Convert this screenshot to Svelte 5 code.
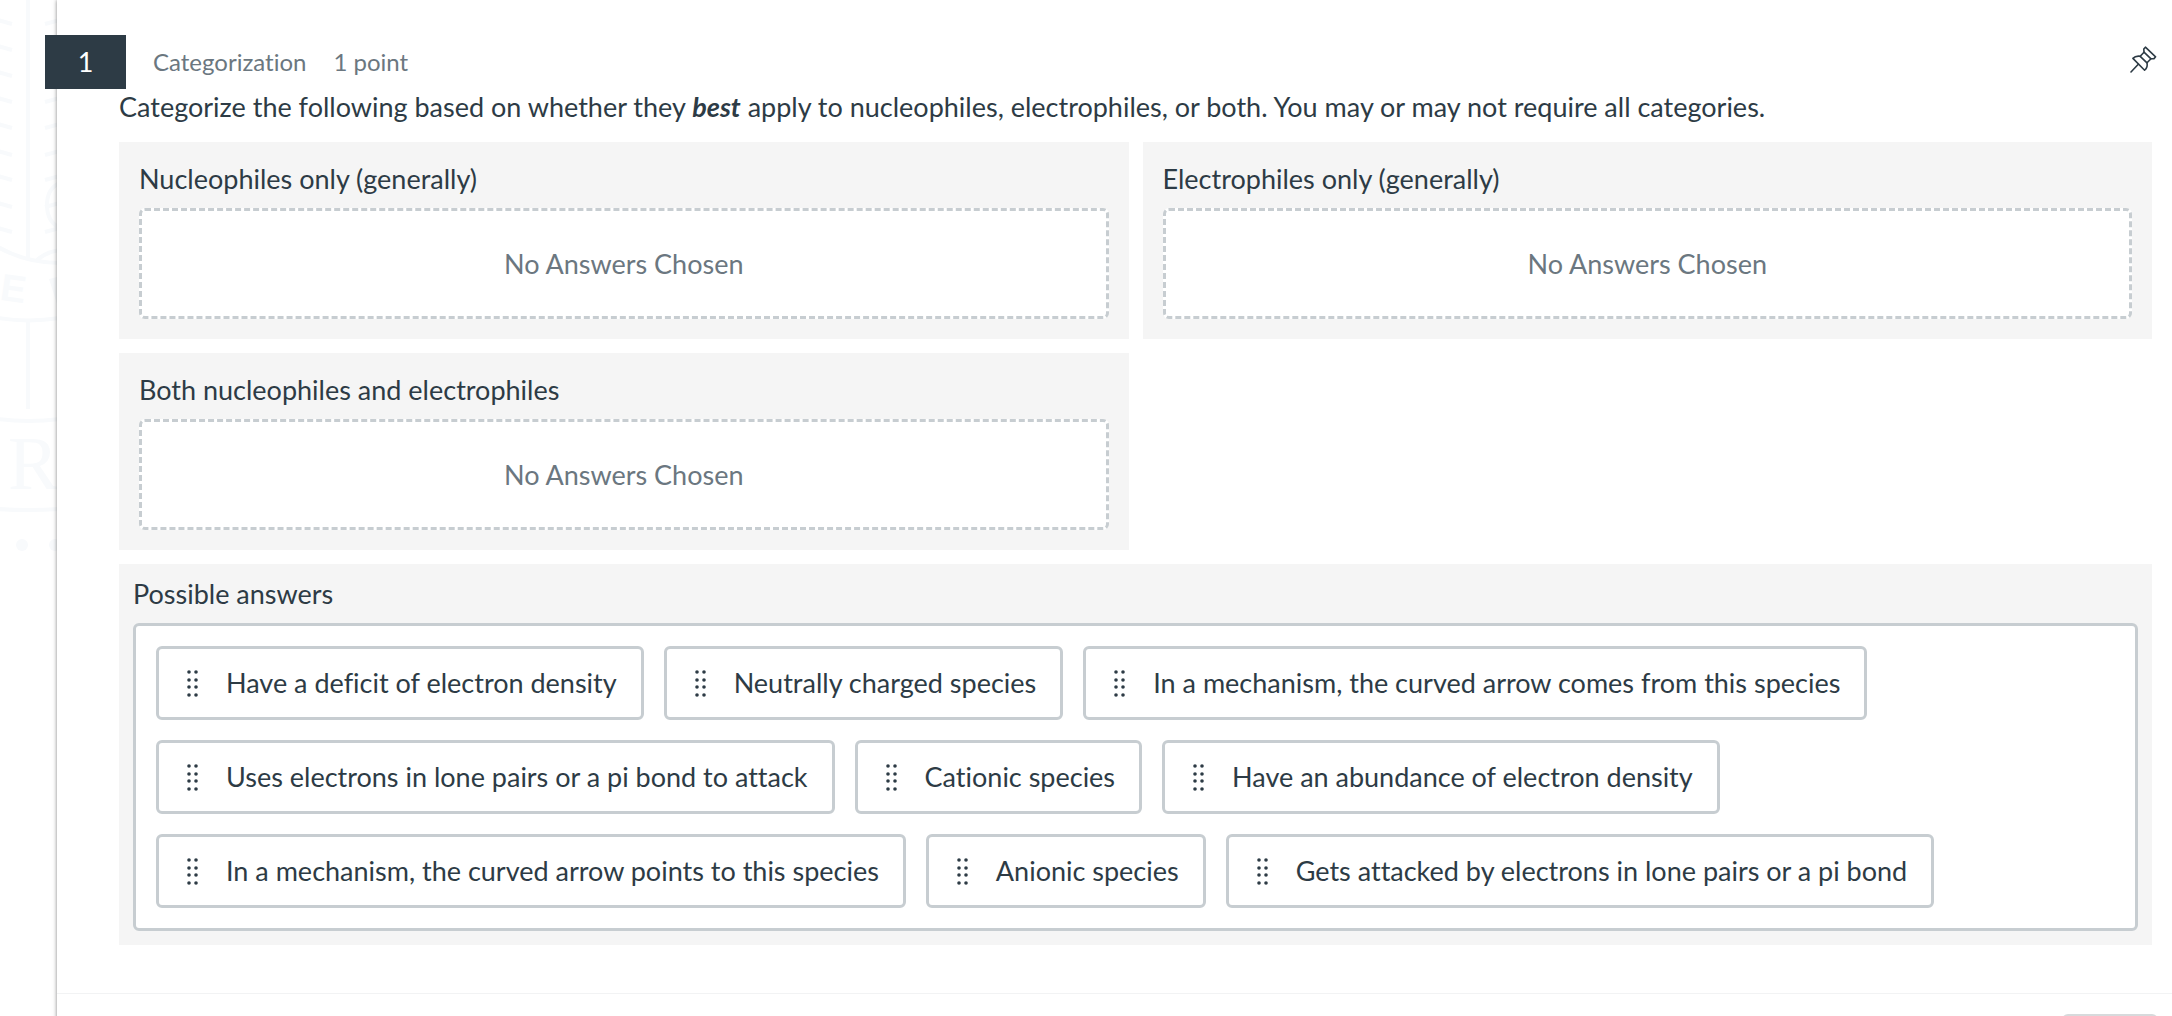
<script>
    const categories = [
        'Nucleophiles only (generally)',
        'Electrophiles only (generally)',
        'Both nucleophiles and electrophiles'
    ];

    const answers = [
        'Have a deficit of electron density',
        'Neutrally charged species',
        'In a mechanism, the curved arrow comes from this species',
        'Uses electrons in lone pairs or a pi bond to attack',
        'Cationic species',
        'Have an abundance of electron density',
        'In a mechanism, the curved arrow points to this species',
        'Anionic species',
        'Gets attacked by electrons in lone pairs or a pi bond'
    ];

    const leftTicks = [22, 48, 74, 100, 126, 153, 178, 205, 230];

    let pinned = $state(false);
</script>

<div class="page">
    <!-- faint crest behind the sheet -->
    <svg class="crest" width="60" height="560" viewBox="0 0 60 560" aria-hidden="true">
        <g fill="none" stroke="#f8fafc" stroke-width="4">
            <path d="M28 0V260M28 320V409" />
            {#each leftTicks as y}
                <path d="M-2 {y - 2}L12 {y + 2}M45 {y + 2}L60 {y - 2}" />
            {/each}
            <path d="M-2 247Q26 263 60 263M37 260Q46 252 60 250" />
            <path d="M60 183Q47 188 47 205T60 228" />
            <path d="M-2 318Q28 323 60 318M-2 419Q28 423 60 419M-2 509Q28 511 60 509" />
        </g>
        <g fill="#f8fafc">
            <path d="M49 279L57 277V304Z" />
            <text x="-1" y="300" font-family="Liberation Sans, sans-serif" font-weight="700" font-size="38" transform="rotate(8 0 300)">E</text>
            <text x="8" y="489" font-family="Liberation Serif, serif" font-size="76">R</text>
            <circle cx="22" cy="545" r="6" />
            <circle cx="55" cy="545" r="6" />
        </g>
    </svg>

    <main class="sheet">
        <header>
            <span class="number">1</span>
            <span class="meta">Categorization</span>
            <span class="meta">1 point</span>
            <button class="pin" aria-label="Pin" aria-pressed={pinned} onclick={() => (pinned = !pinned)}>
                <svg width="28" height="28" viewBox="0 0 28 28" fill="none" stroke="#2d3b45" stroke-width="1.6" stroke-linejoin="round" stroke-linecap="round">
                    <path d="M2 27L9.3 19.2" />
                    <path d="M3.9 13.4Q6.5 10.6 11.2 11.3L18 17.8Q19 22.5 15.6 25.2Z" />
                    <path d="M11.2 11.3L15 7.2M18 17.8L22 13.8" />
                    <path d="M16.4 2.2L26.6 11.8L25 13.6L22 13.8L15 7.2L14.8 4Z" />
                </svg>
            </button>
        </header>

        <section class="question">
            <p>
                Categorize the following based on whether they <strong><em>best</em></strong> apply to nucleophiles,
                electrophiles, or both. You may or may not require all categories.
            </p>

            <div class="categories">
                {#each categories as category}
                    <div class="category">
                        <h3>{category}</h3>
                        <div class="dropzone">No Answers Chosen</div>
                    </div>
                {/each}
            </div>

            <div class="possible">
                <h3>Possible answers</h3>
                <div class="answers">
                    {#each answers as answer}
                        <button class="answer" draggable="true">
                            <svg width="12" height="28" viewBox="0 0 12 28" fill="#2d3b45" aria-hidden="true">
                                {#each [3, 11, 18, 26] as y}
                                    <circle cx="2" cy={y} r="1.8" />
                                    <circle cx="9" cy={y} r="1.8" />
                                {/each}
                            </svg>
                            {answer}
                        </button>
                    {/each}
                </div>
            </div>
        </section>

        <footer>
            <button class="next" aria-label="Next"></button>
        </footer>
    </main>
</div>

<style>
    :global(body) {
        background: #fff;
    }
    .page {
        position: relative;
        height: 100vh;
        overflow: hidden;
        font-family: Lato, sans-serif;
        font-size: 27px;
        line-height: 40px;
        font-variant-ligatures: no-common-ligatures;
        color: #2d3b45;
    }
    .crest {
        position: absolute;
        top: 0;
        left: 0;
    }
    .sheet {
        position: relative;
        box-sizing: border-box;
        min-height: 100vh;
        margin-left: 57px;
        padding-top: 35px;
        background: #fff;
        box-shadow: 0 0 4px rgba(0, 0, 0, .5);
    }
    header {
        display: flex;
        align-items: center;
        gap: 27px;
        height: 54px;
        margin-left: -12px;
        padding-right: 15px;
    }
    .number {
        width: 81px;
        line-height: 54px;
        text-align: center;
        color: #fff;
        background: #2d3b45;
    }
    .meta {
        font-size: 24px;
        color: #6b7780;
    }
    .pin {
        display: flex;
        align-self: flex-start;
        margin-left: auto;
        padding: 10px 0;
        border: 0;
        background: none;
        cursor: pointer;
    }
    .question {
        padding: 0 20px 0 62px;
    }
    p {
        margin: 0 0 17px;
        line-height: 36px;
    }
    h3 {
        margin: 0;
        font-size: 27px;
        font-weight: 400;
    }
    .categories {
        display: grid;
        grid-template-columns: 1fr 1fr;
        gap: 14px;
        margin-bottom: 14px;
    }
    .category {
        padding: 17px 20px 20px;
        background: #f5f5f5;
    }
    .category h3,
    .possible h3 {
        margin-bottom: 9px;
    }
    .dropzone {
        display: flex;
        align-items: center;
        justify-content: center;
        height: 105px;
        border: 3px dashed #c7cdd1;
        border-radius: 6px;
        background: #fff;
        color: #6b7780;
    }
    .possible {
        padding: 10px 14px 14px;
        background: #f5f5f5;
    }
    .answers {
        display: flex;
        flex-wrap: wrap;
        gap: 20px;
        padding: 20px;
        border: 3px solid #c7cdd1;
        border-radius: 6px;
        background: #fff;
    }
    .answer {
        display: flex;
        align-items: center;
        gap: 27px;
        height: 74px;
        padding: 0 24px 0 28px;
        border: 3px solid #c7cdd1;
        border-radius: 6px;
        background: #fff;
        font: inherit;
        font-variant-ligatures: inherit;
        color: inherit;
        cursor: grab;
    }
    footer {
        display: flex;
        justify-content: flex-end;
        margin-top: 48px;
        padding: 20px 14px;
        border-top: 1px solid #f2f3f4;
    }
    .next {
        width: 96px;
        height: 60px;
        border: 2px solid #d7dadc;
        border-radius: 6px;
        background: #fff;
    }
</style>
